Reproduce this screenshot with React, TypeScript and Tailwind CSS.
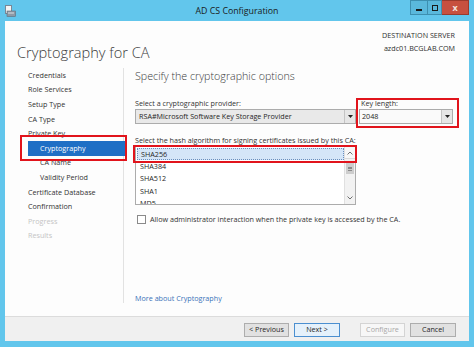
import React from 'react'

type NavItem = { label: string; sub?: boolean; active?: boolean; disabled?: boolean }

const navItems: NavItem[] = [
  { label: 'Credentials' },
  { label: 'Role Services' },
  { label: 'Setup Type' },
  { label: 'CA Type' },
  { label: 'Private Key' },
  { label: 'Cryptography', sub: true, active: true },
  { label: 'CA Name', sub: true },
  { label: 'Validity Period', sub: true },
  { label: 'Certificate Database' },
  { label: 'Confirmation' },
  { label: 'Progress', disabled: true },
  { label: 'Results', disabled: true },
]

const hashes = ['SHA256', 'SHA384', 'SHA512', 'SHA1', 'MD5']

function Caret({ up }: { up?: boolean }) {
  return (
    <svg width="6" height="4" viewBox="0 0 6 4">
      <path d={up ? 'M0.5 3.5 L3 1 L5.5 3.5' : 'M0.5 0.5 L3 3 L5.5 0.5'} fill="none" stroke="#606060" strokeWidth="0.9" />
    </svg>
  )
}

function DropArrow() {
  return (
    <div className="w-[11px] h-full border-l border-[#c4c4c4] bg-[#e6e6e6] flex items-center justify-center">
      <svg width="5" height="3" viewBox="0 0 5 3">
        <path d="M0 0 H5 L2.5 3 Z" fill="#222" />
      </svg>
    </div>
  )
}

function RedBox({ className }: { className: string }) {
  return <span className={`absolute border-[2.5px] border-[#e1141c] pointer-events-none ${className}`} />
}

export default function App() {
  return (
    <div
      className="w-[474px] h-[347px] bg-[#62c6ec] flex flex-col text-[7.2px] text-[#262626] overflow-hidden"
      style={{ fontFamily: '"Open Sans", "Noto Sans", sans-serif' }}
    >
      {/* title bar */}
      <div className="h-[21px] grid grid-cols-[1fr_auto_1fr] items-start">
        <div className="pl-[5px] pt-[5px]">
          <svg width="11" height="12" viewBox="0 0 11 12">
            <rect x="0.5" y="0.5" width="6" height="8" fill="#f4f4f4" stroke="#7a8896" />
            <rect x="2" y="6" width="8.5" height="5.5" fill="#8d99a6" stroke="#5e6b78" strokeWidth="0.6" />
            <rect x="3" y="7.5" width="6" height="1" fill="#d8dde2" />
          </svg>
        </div>
        <div className="pt-[4px] text-[8.8px] leading-[14px] text-[#1a1a1a]">AD CS Configuration</div>
        <div className="flex justify-end pr-[5px]">
          <div className="w-[18px] h-[15px] bg-[#5ab8dc] border border-[#3d8fb0] flex items-end justify-center pb-[3px]">
            <div className="w-[6px] h-[2px] bg-[#1a1a1a]" />
          </div>
          <div className="w-[14px] h-[15px] bg-[#5ab8dc] border-y border-r border-[#3d8fb0] flex items-center justify-center">
            <div className="w-[6px] h-[6px] border-[1.5px] border-[#1a1a1a]" />
          </div>
          <div className="w-[27px] h-[15px] bg-[#c7503f] border-y border-r border-[#9a3a2d] flex items-center justify-center text-[9px] font-bold text-[#f3e0dc] leading-none">
            x
          </div>
        </div>
      </div>

      {/* window body */}
      <div className="flex-1 mx-[5px] mb-[6px] bg-[#fdfdfd] flex flex-col">
        <div className="h-[47px] flex justify-between">
          <div className="pl-[12px] pt-[21px] text-[14.6px] leading-[20px] font-light text-[#3a3a3a]">
            Cryptography for CA
          </div>
          <div className="pr-[14px] pt-[8px] text-right leading-[13px] text-[#303030]">
            <div>DESTINATION SERVER</div>
            <div>azdc01.BCGLAB.COM</div>
          </div>
        </div>

        <div className="flex-1 flex pb-[13px]">
          {/* navigation */}
          <div className="w-[118px] flex flex-col">
            {navItems.map((item) =>
              item.active ? (
                <div key={item.label} className="h-[14.6px] flex relative z-10">
                  <div className="ml-[23px] mr-[-2px] flex-1 bg-[#1f6fc5] text-white pl-[12px] flex items-center relative">
                    {item.label}
                    <RedBox className="left-[-8px] right-[-2px] top-[-6px] bottom-[-5.5px]" />
                  </div>
                </div>
              ) : (
                <div
                  key={item.label}
                  className={`h-[14.6px] flex items-center ${item.sub ? 'pl-[35px]' : 'pl-[23px]'} ${
                    item.disabled ? 'text-[#c4c4c4]' : 'text-[#333]'
                  }`}
                >
                  {item.label}
                </div>
              ),
            )}
          </div>

          {/* content */}
          <div className="flex-1 border-l border-[#e2e2e2] pl-[11px] flex flex-col">
            <div className="text-[10.7px] leading-[16px] font-light text-[#3a3a3a]">Specify the cryptographic options</div>

            <div className="mt-[14px] flex gap-[3px]">
              <div className="w-[221px]">
                <div className="leading-[10px] text-[#333]">Select a cryptographic provider:</div>
                <div className="mt-[1px] h-[15px] border border-[#acacac] bg-[#e9e9e9] flex items-center">
                  <div className="flex-1 pl-[3px]">RSA#Microsoft Software Key Storage Provider</div>
                  <DropArrow />
                </div>
              </div>
              <div className="w-[94px] relative">
                <div className="pl-[2px] leading-[10px] text-[#333]">Key length:</div>
                <div className="mt-[1px] h-[15px] border border-[#acacac] bg-[#fafafa] flex items-center">
                  <div className="flex-1 pl-[2px]">2048</div>
                  <DropArrow />
                </div>
                <RedBox className="left-[-3.5px] right-[-6px] top-[-0.5px] bottom-[-3.5px]" />
              </div>
            </div>

            <div className="mt-[11px] leading-[10px] text-[#333]">
              Select the hash algorithm for signing certificates issued by this CA:
            </div>
            <div className="relative w-[221px] mt-[1px]">
              <div className="h-[59px] border border-[#acacac] bg-white flex overflow-hidden">
                <div className="flex-1 flex flex-col pt-[1px] pl-[1px]">
                  {hashes.map((h, i) => (
                    <div
                      key={h}
                      className={`h-[12.3px] shrink-0 flex items-center pl-[3px] ${
                        i === 0 ? 'bg-[#d5e6f8] border border-dotted border-[#6b8fbd]' : ''
                      }`}
                    >
                      {h}
                    </div>
                  ))}
                </div>
                <div className="w-[11px] bg-[#f2f2f2] border-l border-[#e0e0e0] flex flex-col items-center">
                  <div className="w-full h-[12px] flex items-center justify-center border-b border-[#dadada] bg-[#f7f7f7]">
                    <Caret up />
                  </div>
                  <div className="mt-[4px] w-[8px] h-[11px] bg-[#cdcdcd] flex flex-col items-center justify-center gap-[1px]">
                    <div className="w-[4px] h-[0.5px] bg-[#8a8a8a]" />
                    <div className="w-[4px] h-[0.5px] bg-[#8a8a8a]" />
                    <div className="w-[4px] h-[0.5px] bg-[#8a8a8a]" />
                  </div>
                  <div className="mt-auto w-full h-[12px] flex items-center justify-center">
                    <Caret />
                  </div>
                </div>
              </div>
              <RedBox className="left-[-2.5px] right-[-1px] top-[-1.5px] bottom-[42px]" />
            </div>

            <div className="mt-[9px] flex items-center gap-[4px] pl-[2px]">
              <div className="w-[9px] h-[9px] border border-[#8a8a8a] bg-white" />
              <div className="leading-[10px] text-[#333]">
                Allow administrator interaction when the private key is accessed by the CA.
              </div>
            </div>

            <div className="mt-auto leading-[10px] text-[#3b73b9]">More about Cryptography</div>
          </div>
        </div>

        {/* footer */}
        <div className="h-[25px] border-t border-[#dcdcdc] bg-[#f0f0f0] flex justify-end items-start pt-[6px] pr-[13px]">
          <button className="w-[45px] h-[14px] border border-[#adadad] bg-[#e1e1e1] leading-none text-[#262626]">
            &lt; Previous
          </button>
          <button className="ml-[5px] w-[46px] h-[14px] border border-[#4b8fd0] bg-[#e5f1fb] leading-none text-[#262626]">
            Next &gt;
          </button>
          <button className="ml-[20px] w-[45px] h-[14px] border border-[#d4d4d4] bg-[#f7f7f7] leading-none text-[#a8a8a8]">
            Configure
          </button>
          <button className="ml-[5px] w-[46px] h-[14px] border border-[#adadad] bg-[#e1e1e1] leading-none text-[#262626]">
            Cancel
          </button>
        </div>
      </div>
    </div>
  )
}
